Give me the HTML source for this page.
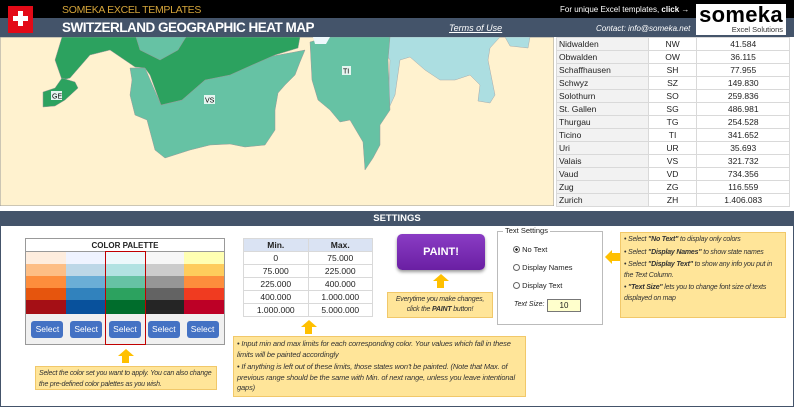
<!DOCTYPE html>
<html><head><meta charset="utf-8"><style>
*{margin:0;padding:0;box-sizing:border-box}
body{width:794px;height:407px;overflow:hidden;background:#fff;font-family:"Liberation Sans",sans-serif;position:relative;font-size:9px;color:#222}
.a{position:absolute}
.note{position:absolute;background:#ffe599;border:1px solid #f1c86a;font-style:italic;color:#333;font-size:7.5px;letter-spacing:-0.15px;line-height:10.5px;padding:2px 3px}
table{border-collapse:collapse}
.dt td{height:13px;border:1px solid #d9d9d9;font-size:8.5px;padding:0 2px}
.arrU{position:absolute;width:0;height:0;border-left:8px solid transparent;border-right:8px solid transparent;border-bottom:7px solid #ffc000}
.stem{position:absolute;background:#ffc000;width:7px;height:7px}
.sel{display:inline-block;width:32px;height:17px;background:#4472c4;color:#fff;border-radius:3px;font-size:8.5px;line-height:17px;text-align:center}
</style></head><body>
<div class="a" style="left:0;top:0;width:794px;height:18px;background:#000"></div>
<div class="a" style="left:0;top:18px;width:794px;height:19px;background:#44546a"></div>
<div class="a" style="left:8px;top:6px;width:25px;height:27px;background:#e30a17"></div>
<div class="a" style="left:18px;top:11px;width:5px;height:15px;background:#fff"></div>
<div class="a" style="left:13px;top:16px;width:15px;height:5px;background:#fff"></div>
<div class="a" style="left:62px;top:4px;color:#d4a43a;font-size:10.5px;letter-spacing:-0.3px">SOMEKA EXCEL TEMPLATES</div>
<div class="a" style="left:62px;top:20px;color:#fff;font-size:13.5px;font-weight:bold;letter-spacing:-0.5px">SWITZERLAND GEOGRAPHIC HEAT MAP</div>
<div class="a" style="left:449px;top:23px;color:#fff;font-size:9px;font-style:italic;text-decoration:underline">Terms of Use</div>
<div class="a" style="left:560px;top:5px;color:#fff;font-size:8px">For unique Excel templates, <b>click →</b></div>
<div class="a" style="left:596px;top:24px;color:#fff;font-size:8px;font-style:italic">Contact: info@someka.net</div>
<div class="a" style="left:696px;top:4px;width:90px;height:31px;background:#fff;text-align:center">
<div style="font-size:22px;line-height:21px;color:#000;font-weight:bold;letter-spacing:.3px">someka</div>
<div style="font-size:7.5px;color:#333;text-align:right;padding-right:3px">Excel Solutions</div></div>

<svg class="a" style="left:0;top:37px" width="554" height="169" viewBox="0 37 554 169">
<rect x="0" y="37" width="554" height="169" fill="#fff2cf" stroke="#999"/>
<polygon points="505,37 530,37 528,48 510,46" fill="#acdee1" stroke="#aaa" stroke-width=".5"/>
<polygon points="375,37 500,37 490,48 488,60 495,95 490,103 478,101 480,85 470,75 455,80 440,80 425,70 410,57 400,60 395,95 388,110 390,60" fill="#acdee1" stroke="#aaa" stroke-width=".5"/>
<polygon points="310,42 328,37 390,37 388,60 390,110 380,125 380,145 373,158 365,170 363,142 350,120 340,122 330,110 318,100 312,80" fill="#66c2a4" stroke="#999" stroke-width=".5"/>
<polygon points="313,37 330,37 326,44 315,44" fill="#eef8fb"/>
<polygon points="130,68 145,68 161,105 182,100 205,80 235,72 262,58 295,52 305,50 300,62 295,75 285,85 278,93 275,110 275,130 265,145 245,147 230,144 210,145 190,150 165,158 155,150 147,120 135,115 130,95 132,80" fill="#66c2a4" stroke="#999" stroke-width=".5"/>
<polygon points="62,37 300,37 298,48 275,55 250,66 230,75 205,80 182,100 161,105 150,75 145,68 135,67 110,50 90,55 70,78 62,80 55,60" fill="#2ca25f" stroke="#999" stroke-width=".5"/>
<polygon points="136,37 186,37 178,50 160,60 140,50" fill="#66c2a4" stroke="#999" stroke-width=".5"/>
<polygon points="62,78 75,82 78,88 65,100 55,106 43,107 43,92 55,88" fill="#2ca25f" stroke="#999" stroke-width=".5"/>
<rect x="51" y="91" width="11" height="9" fill="#e5f5f0"/><text x="52" y="98.5" font-size="7" font-family="Liberation Sans">GE</text>
<rect x="204" y="95" width="11" height="9" fill="#e5f5f0"/><text x="205" y="102.5" font-size="7" font-family="Liberation Sans">VS</text>
<rect x="342" y="66" width="9" height="9" fill="#e5f5f0"/><text x="343" y="73.5" font-size="7" font-family="Liberation Sans">TI</text>
</svg>

<table class="a dt" style="left:556px;top:37px;width:234px">
<col style="width:92px"><col style="width:49px"><col style="width:93px">
<tr><td style="background:#f2f2f2">Nidwalden</td><td align="center">NW</td><td align="center">41.584</td></tr>
<tr><td style="background:#f2f2f2">Obwalden</td><td align="center">OW</td><td align="center">36.115</td></tr>
<tr><td style="background:#f2f2f2">Schaffhausen</td><td align="center">SH</td><td align="center">77.955</td></tr>
<tr><td style="background:#f2f2f2">Schwyz</td><td align="center">SZ</td><td align="center">149.830</td></tr>
<tr><td style="background:#f2f2f2">Solothurn</td><td align="center">SO</td><td align="center">259.836</td></tr>
<tr><td style="background:#f2f2f2">St. Gallen</td><td align="center">SG</td><td align="center">486.981</td></tr>
<tr><td style="background:#f2f2f2">Thurgau</td><td align="center">TG</td><td align="center">254.528</td></tr>
<tr><td style="background:#f2f2f2">Ticino</td><td align="center">TI</td><td align="center">341.652</td></tr>
<tr><td style="background:#f2f2f2">Uri</td><td align="center">UR</td><td align="center">35.693</td></tr>
<tr><td style="background:#f2f2f2">Valais</td><td align="center">VS</td><td align="center">321.732</td></tr>
<tr><td style="background:#f2f2f2">Vaud</td><td align="center">VD</td><td align="center">734.356</td></tr>
<tr><td style="background:#f2f2f2">Zug</td><td align="center">ZG</td><td align="center">116.559</td></tr>
<tr><td style="background:#f2f2f2">Zurich</td><td align="center">ZH</td><td align="center">1.406.083</td></tr>
</table>

<div class="a" style="left:0;top:211px;width:794px;height:15px;background:#44546a;color:#fff;font-weight:bold;font-size:9.5px;text-align:center;line-height:15px">SETTINGS</div>
<div class="a" style="left:0;top:226px;width:794px;height:181px;border:1px solid #44546a;border-top:none"></div>

<div class="a" style="left:25px;top:238px;width:200px;height:107px;border:1px solid #999;background:#f0f0f0">
<div style="height:13px;background:#fff;text-align:center;font-weight:bold;font-size:8px;line-height:13px;border-bottom:1px solid #999">COLOR PALETTE</div>
<div style="display:flex;height:62px">
<div style="width:40px"><div style="height:12px;background:#feedde"></div><div style="height:12px;background:#fdbe85"></div><div style="height:12px;background:#fd8d3c"></div><div style="height:12px;background:#e6550d"></div><div style="height:14px;background:#a50f15"></div></div>
<div style="width:40px"><div style="height:12px;background:#eff3ff"></div><div style="height:12px;background:#bdd7e7"></div><div style="height:12px;background:#6baed6"></div><div style="height:12px;background:#3182bd"></div><div style="height:14px;background:#08519c"></div></div>
<div style="width:40px"><div style="height:12px;background:#edf8fb"></div><div style="height:12px;background:#b2e2e2"></div><div style="height:12px;background:#66c2a4"></div><div style="height:12px;background:#2ca25f"></div><div style="height:14px;background:#006d2c"></div></div>
<div style="width:40px"><div style="height:12px;background:#f7f7f7"></div><div style="height:12px;background:#cccccc"></div><div style="height:12px;background:#969696"></div><div style="height:12px;background:#636363"></div><div style="height:14px;background:#252525"></div></div>
<div style="width:40px"><div style="height:12px;background:#ffffb2"></div><div style="height:12px;background:#fecc5c"></div><div style="height:12px;background:#fd8d3c"></div><div style="height:12px;background:#f03b20"></div><div style="height:14px;background:#bd0026"></div></div>
</div>
<div style="display:flex;height:30px;align-items:center;justify-content:space-around;padding:0 2px"><span class="sel">Select</span><span class="sel">Select</span><span class="sel">Select</span><span class="sel">Select</span><span class="sel">Select</span></div>
</div>
<div class="a" style="left:105px;top:251px;width:41px;height:94px;border:1px solid #c00000"></div>
<div class="stem" style="left:122px;top:356px"></div><div class="arrU" style="left:118px;top:349px"></div>
<div class="note" style="left:35px;top:366px;width:182px;height:24px;font-size:7px;letter-spacing:-0.2px">Select the color set you want to apply. You can also change the pre-defined color palettes as you wish.</div>

<table class="a dt" style="left:243px;top:238px;width:130px;border:1px solid #999">
<tr><td align="center" style="background:#dae3f3;font-weight:bold">Min.</td><td align="center" style="background:#dae3f3;font-weight:bold">Max.</td></tr>
<tr><td align="center">0</td><td align="center">75.000</td></tr>
<tr><td align="center">75.000</td><td align="center">225.000</td></tr>
<tr><td align="center">225.000</td><td align="center">400.000</td></tr>
<tr><td align="center">400.000</td><td align="center">1.000.000</td></tr>
<tr><td align="center">1.000.000</td><td align="center">5.000.000</td></tr>
</table>
<div class="stem" style="left:305px;top:327px"></div><div class="arrU" style="left:301px;top:320px"></div>
<div class="note" style="left:233px;top:336px;width:293px;height:61px">• Input min and max limits for each corresponding color. Your values which fall in these limits will be painted accordingly<br><span style="display:block;margin-top:2px">• If anything is left out of these limits, those states won't be painted. (Note that Max. of previous range should be the same with Min. of next range, unless you leave intentional gaps)</span></div>

<div class="a" style="left:397px;top:234px;width:88px;height:36px;background:linear-gradient(#8a3cc4,#6a1fa3);border-radius:5px;color:#fff;font-weight:bold;font-size:11px;text-align:center;line-height:36px;box-shadow:0 2px 3px #999">PAINT!</div>
<div class="stem" style="left:437px;top:281px"></div><div class="arrU" style="left:433px;top:274px"></div>
<div class="note" style="left:387px;top:292px;width:106px;height:26px;text-align:center;font-size:7px;letter-spacing:-0.2px;line-height:10px">Everytime you make changes, click the <b>PAINT</b> button!</div>

<div class="a" style="left:497px;top:231px;width:106px;height:94px;border:1px solid #bbb"></div>
<div class="a" style="left:503px;top:226px;background:#fff;padding:0 2px;font-size:7.5px">Text Settings</div>
<div class="a" style="left:513px;top:245px;font-size:7.5px"><span style="display:inline-block;width:7px;height:7px;border:1px solid #666;border-radius:50%;background:radial-gradient(#222 35%,#fff 40%);vertical-align:-1px"></span> No Text</div>
<div class="a" style="left:513px;top:263px;font-size:7.5px"><span style="display:inline-block;width:7px;height:7px;border:1px solid #666;border-radius:50%;vertical-align:-1px"></span> Display Names</div>
<div class="a" style="left:513px;top:281px;font-size:7.5px"><span style="display:inline-block;width:7px;height:7px;border:1px solid #666;border-radius:50%;vertical-align:-1px"></span> Display Text</div>
<div class="a" style="left:514px;top:301px;font-size:7px;font-style:italic">Text Size:</div>
<div class="a" style="left:547px;top:299px;width:34px;height:13px;background:#ffffcc;border:1px solid #777;font-size:8px;text-align:center;line-height:11px">10</div>

<div class="a" style="left:605px;top:250px;width:0;height:0;border-top:7px solid transparent;border-bottom:7px solid transparent;border-right:7px solid #ffc000"></div>
<div class="a" style="left:612px;top:253px;width:8px;height:8px;background:#ffc000"></div>
<div class="note" style="left:620px;top:232px;width:166px;height:86px;font-size:7px;letter-spacing:-0.2px;line-height:10.5px">• Select <b>"No Text"</b> to display only colors<br><span style="display:block;margin-top:2px">• Select <b>"Display Names"</b> to show state names</span><span style="display:block;margin-top:2px">• Select <b>"Display Text"</b> to show any info you put in the Text Column.</span><span style="display:block;margin-top:2px">• <b>"Text Size"</b> lets you to change font size of texts displayed on map</span></div>
</body></html>
